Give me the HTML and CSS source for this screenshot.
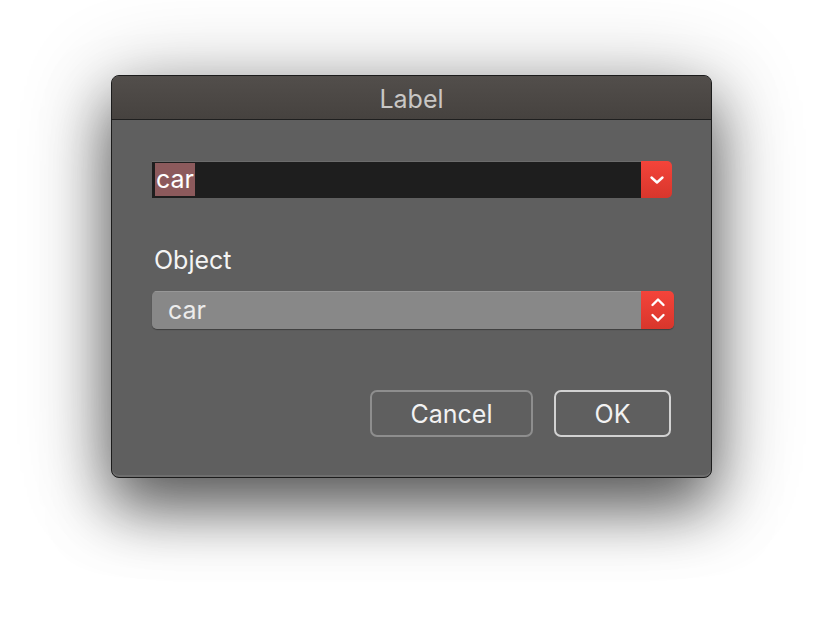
FILE: index.html
```html
<!DOCTYPE html>
<html>
<head>
<meta charset="utf-8">
<link rel="stylesheet" href="styles.css">
</head>
<body>
<div class="window">
  <div class="titlebar">Label</div>
  <div class="content">
    <div class="combo">
      <div class="combo-field"><span class="sel">car</span></div>
      <div class="combo-btn">
        <svg width="16" height="10" viewBox="0 0 16 10"><path d="M2.5 2.5 L8 7.5 L13.5 2.5" fill="none" stroke="#fff" stroke-width="2.4" stroke-linecap="round" stroke-linejoin="round"/></svg>
      </div>
    </div>
    <div class="label">Object</div>
    <div class="popup">
      <div class="popup-field">car</div>
      <div class="popup-btn">
        <svg width="16" height="28" viewBox="0 0 16 28"><path d="M2.5 9 L8 3.5 L13.5 9" fill="none" stroke="#fff" stroke-width="2.4" stroke-linecap="round" stroke-linejoin="round"/><path d="M2.5 19 L8 24.5 L13.5 19" fill="none" stroke="#fff" stroke-width="2.4" stroke-linecap="round" stroke-linejoin="round"/></svg>
      </div>
    </div>
    <div class="buttons">
      <div class="btn cancel">Cancel</div>
      <div class="btn ok">OK</div>
    </div>
  </div>
</div>
</body>
</html>
```

FILE: styles.css
```css
html, body {
  margin: 0;
  padding: 0;
  background: #ffffff;
  width: 824px;
  height: 626px;
  overflow: hidden;
}
body {
  padding: 75px 0 0 111px;
  box-sizing: border-box;
  font-family: Inter, "Noto Sans", "Liberation Sans", sans-serif;
}
.window {
  width: 601px;
  height: 403px;
  box-sizing: border-box;
  border: 1px solid #1c1c1c;
  border-radius: 8px;
  background: #5f5f5f;
  box-shadow: 0 30px 60px rgba(0,0,0,0.55), 0 10px 90px rgba(0,0,0,0.3), inset 0 -2px 0 #6e6e6e;
  overflow: hidden;
  display: flex;
  flex-direction: column;
}
.titlebar {
  height: 43px;
  border-bottom: 1px solid #1f1f1f;
  background: linear-gradient(#524e4b, #46423f);
  color: #c9c7c5;
  font-size: 25px;
  line-height: 46px;
  text-align: center;
  flex: none;
}
.content {
  padding: 41px 39px 0 40px;
  display: flex;
  flex-direction: column;
}
.combo {
  display: flex;
  width: 520px;
  height: 37px;
}
.combo-field {
  flex: 1;
  background: #1e1e1e;
  border-top: 1px solid #6c6c6c;
  box-sizing: border-box;
  padding: 1px 0 2px 3px;
  display: flex;
}
.sel {
  background: #8c5a5c;
  color: #ffffff;
  font-size: 25px;
  line-height: 33px;
  padding: 0 1px 0 1px;
}
.combo-btn {
  width: 31px;
  background: linear-gradient(#f4443a, #d8362c);
  border-radius: 0 5px 5px 0;
  display: flex;
  align-items: center;
  justify-content: center;
}
.label {
  margin-top: 48px;
  color: #f4f4f4;
  font-size: 25px;
  line-height: 28px;
  padding-left: 2px;
}
.popup {
  margin-top: 17px;
  display: flex;
  width: 522px;
  height: 38px;
  border-radius: 5px;
  overflow: hidden;
  box-shadow: 0 1px 1px rgba(0,0,0,0.35);
}
.popup-field {
  flex: 1;
  background: #888888;
  border-top: 1px solid #979797;
  color: #ececec;
  font-size: 25px;
  line-height: 37px;
  padding-left: 16px;
}
.popup-btn {
  width: 33px;
  background: linear-gradient(#f4443a, #d8362c);
  display: flex;
  align-items: center;
  justify-content: center;
}
.buttons {
  margin-top: 61px;
  display: flex;
  justify-content: flex-end;
  gap: 21px;
  padding-right: 1px;
}
.btn {
  height: 47px;
  box-sizing: border-box;
  border-radius: 7px;
  color: #f2f2f2;
  font-size: 25px;
  display: flex;
  align-items: center;
  justify-content: center;
}
.cancel {
  width: 163px;
  border: 2px solid #8e8e8e;
}
.ok {
  width: 117px;
  border: 2px solid #d2d2d2;
}
```
